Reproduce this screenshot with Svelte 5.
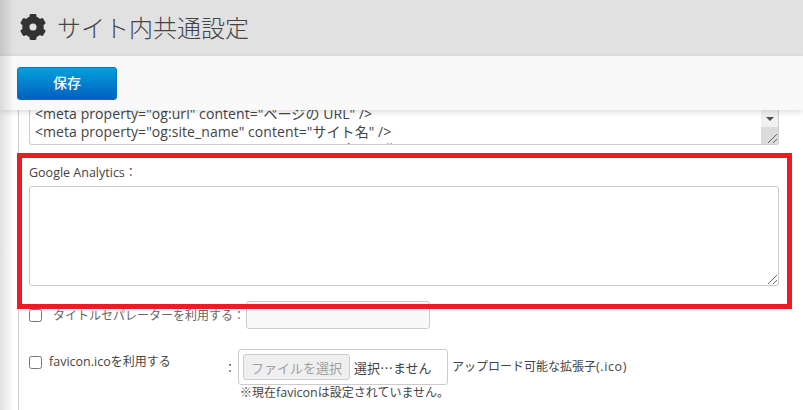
<script lang="ts">
	const metaLines = [
		'<meta property="og:url" content="ページの URL" />',
		'<meta property="og:site_name" content="サイト名" />',
		'<meta property="og:image" content="サイトを表す画像URL" />'
	];
	const teeth = [0, 60, 120, 180, 240, 300];
</script>

<div class="page">
	<div class="main">
		<header class="title-bar">
			<svg class="gear" viewBox="0 0 24 24" width="26" height="26" aria-hidden="true">
				<circle cx="12" cy="12" r="6.6" fill="none" stroke="#333" stroke-width="6.6" />
				{#each teeth as deg}
					<rect x="8.8" y="0" width="6.4" height="6" rx="1.3" fill="#333" transform="rotate({deg} 12 12)" />
				{/each}
			</svg>
			<h1>サイト内共通設定</h1>
		</header>

		<div class="toolbar">
			<button class="save" type="button">保存</button>
		</div>

		<div class="content">
			<div class="meta-box">
				<div class="meta-text">
					{#each metaLines as line}
						<div>{line}</div>
					{/each}
				</div>
				<div class="scrollbar">
					<div class="arrow-track"><span class="arrow"></span></div>
					<div class="thumb">
						<svg width="11" height="11" viewBox="0 0 11 11" aria-hidden="true">
							<path d="M1 10 10 1M6 10 10 6" stroke="#666" stroke-width="1" fill="none" />
						</svg>
					</div>
				</div>
			</div>

			<div class="field">
				<div class="field-label"><span class="latin">Google Analytics</span>：</div>
				<div class="area">
					<svg class="grip" width="11" height="11" viewBox="0 0 11 11" aria-hidden="true">
						<path d="M1 10 10 1M6 10 10 6" stroke="#666" stroke-width="1" fill="none" />
					</svg>
				</div>
			</div>

			<div class="sep-row">
				<span class="check"></span>
				<span class="sep-label">タイトルセパレーターを利用する：</span>
				<span class="text-input"></span>
			</div>

			<div class="fav-row">
				<span class="check fav-check"></span>
				<span class="fav-label"><span class="latin">favicon.ico</span>を利用する</span>
				<span class="colon">：</span>
				<div class="fav-body">
					<div class="fav-line">
						<div class="file-box">
							<span class="file-btn">ファイルを選択</span>
							<span class="file-name">選択…ません</span>
						</div>
						<span class="ext">アップロード可能な拡張子<span class="latin ext-type">(.ico)</span></span>
					</div>
					<div class="note">※現在<span class="latin">favicon</span>は設定されていません。</div>
				</div>
			</div>
		</div>
	</div>
	<div class="gutter"></div>
	<div class="highlight"></div>
</div>

<style>
	:global(body) {
		margin: 0;
		background: #fff;
		overflow: hidden;
	}

	.page {
		position: relative;
		width: 803px;
		height: 410px;
		overflow: hidden;
		font-family: "Open Sans", "Noto Sans CJK JP", sans-serif;
		font-size: 12px;
		color: #444;
	}

	.gutter {
		position: absolute;
		left: 0;
		top: 0;
		bottom: 0;
		width: 14px;
		background: linear-gradient(to right, rgba(0, 0, 0, 0.12), rgba(0, 0, 0, 0));
		z-index: 3;
	}

	.main {
		height: 100%;
		display: flex;
		flex-direction: column;
	}

	.latin {
		font-size: 12.5px;
	}

	.title-bar {
		height: 56px;
		flex: none;
		background: #e1e1e1;
		display: flex;
		align-items: center;
		padding: 0 0 3px 20px;
		gap: 11px;
		box-sizing: border-box;
	}

	.gear {
		flex: none;
	}

	h1 {
		margin: 0;
		font-size: 24px;
		font-weight: 300;
		color: #444;
		line-height: 1;
		font-family: "Noto Sans CJK JP", sans-serif;
	}

	.toolbar {
		height: 54px;
		flex: none;
		background: #f9f9f9;
		box-shadow: 0 2px 6px rgba(0, 0, 0, 0.14);
		position: relative;
		z-index: 2;
		padding: 11px 0 0 17px;
		box-sizing: border-box;
	}

	.save {
		display: block;
		width: 100px;
		height: 33px;
		padding: 0 0 3px;
		border: 1px solid #0a6fbd;
		border-radius: 3px;
		background: linear-gradient(to bottom, #04a0dc, #0060bf);
		color: #fff;
		font: 500 14px "Noto Sans CJK JP", sans-serif;
	}

	.content {
		flex: 1;
		min-height: 0;
		overflow: hidden;
		margin-left: 18px;
		border-left: 1px solid #ccc;
		padding-left: 10px;
	}

	.meta-box {
		width: 750px;
		height: 35px;
		box-sizing: border-box;
		border: 1px solid #ccc;
		border-top: 0;
		border-radius: 0 0 3px 3px;
		position: relative;
		overflow: hidden;
	}

	.meta-text {
		padding-left: 5px;
		font-size: 14px;
		letter-spacing: 0.07px;
		line-height: 18px;
		white-space: nowrap;
		color: #444;
		margin-top: -5px;
	}

	.scrollbar {
		position: absolute;
		right: 0;
		top: 0;
		bottom: 0;
		width: 17px;
		display: flex;
		flex-direction: column;
	}

	.arrow-track {
		height: 17px;
		background: #f1f1f1;
		display: flex;
		justify-content: center;
		padding-top: 7px;
		box-sizing: border-box;
	}

	.arrow {
		width: 0;
		height: 0;
		border-left: 4px solid transparent;
		border-right: 4px solid transparent;
		border-top: 4px solid #505050;
	}

	.thumb {
		flex: 1;
		background: #dcdcdc;
		display: flex;
		justify-content: flex-end;
		align-items: flex-end;
	}

	.field {
		margin-top: 19px;
	}

	.field-label {
		font-size: 12px;
		height: 16px;
		line-height: 18px;
		margin-bottom: 6px;
	}

	.area {
		width: 750px;
		height: 100px;
		box-sizing: border-box;
		border: 1px solid #ccc;
		border-radius: 3px;
		background: #fff;
		position: relative;
	}

	.grip {
		position: absolute;
		right: 0;
		bottom: 0;
	}

	.sep-row {
		display: flex;
		align-items: center;
		margin-top: 15px;
		height: 28px;
	}

	.check {
		width: 13px;
		height: 13px;
		flex: none;
		box-sizing: border-box;
		border: 1px solid #767676;
		border-radius: 2.5px;
		background: #fff;
	}

	.sep-label {
		margin-left: 11px;
		width: 193px;
		flex: none;
		font-size: 12px;
		white-space: nowrap;
		color: #666;
	}

	.text-input {
		width: 184px;
		height: 28px;
		box-sizing: border-box;
		border: 1px solid #ccc;
		border-radius: 3px;
		background: #f9f9f9;
	}

	.fav-row {
		display: flex;
		align-items: flex-start;
		margin-top: 20px;
	}

	.fav-check {
		margin-top: 7px;
	}

	.fav-label {
		margin-left: 7px;
		margin-top: 4px;
		width: 175px;
		flex: none;
		line-height: 17px;
		white-space: nowrap;
	}

	.colon {
		width: 14px;
		flex: none;
		margin-top: 11px;
		line-height: 17px;
	}

	.fav-line {
		display: flex;
		align-items: center;
		gap: 4px;
	}

	.file-box {
		width: 210px;
		height: 36px;
		box-sizing: border-box;
		border: 1px solid #ccc;
		border-radius: 3px;
		display: flex;
		align-items: center;
		padding-left: 4px;
		gap: 4px;
		white-space: nowrap;
	}

	.file-btn {
		width: 107px;
		height: 26px;
		box-sizing: border-box;
		border: 1px solid #ccc;
		border-radius: 3px;
		background: #efefef;
		color: #a0a0a0;
		display: flex;
		align-items: center;
		justify-content: center;
		font-size: 13px;
	}

	.file-name {
		font-family: "Noto Sans CJK JP", sans-serif;
		font-size: 13px;
	}

	.ext {
		white-space: nowrap;
		padding-bottom: 2px;
	}

	.ext-type {
		letter-spacing: 0.6px;
	}

	.note {
		margin-left: 2px;
		line-height: 15px;
	}

	.highlight {
		position: absolute;
		left: 17px;
		top: 153px;
		width: 775px;
		height: 156px;
		box-sizing: border-box;
		border: 5px solid #ed1c24;
		pointer-events: none;
	}
</style>
